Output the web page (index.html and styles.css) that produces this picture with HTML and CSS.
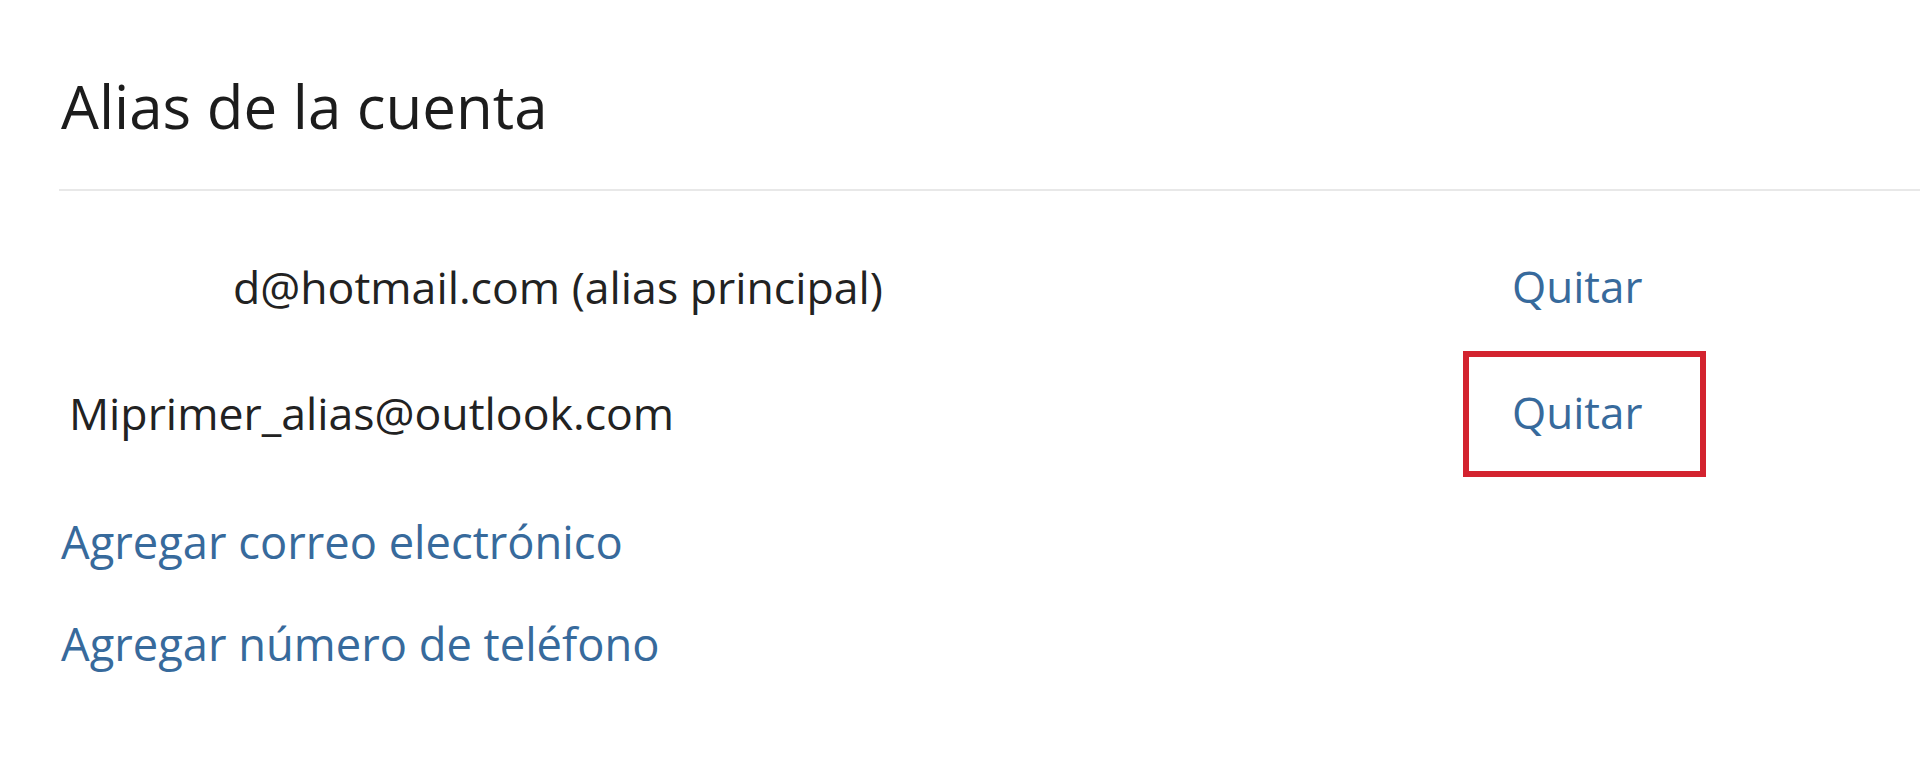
FILE: index.html
```html
<!DOCTYPE html>
<html lang="es">
    <head>
        <meta charset="UTF-8" />
        <meta name="viewport" content="width=device-width, initial-scale=1.0" />
        <title>Alias de la cuenta</title>
        <link rel="stylesheet" href="styles.css">
    </head>
    <body>
        <main class="page">
            <h1 class="title">Alias de la cuenta</h1>

            <ul class="alias-list">
                <li class="alias-row">
                    <span class="alias alias-primary">d@hotmail.com (alias principal)</span>
                    <a class="link" href="#">Quitar</a>
                </li>
                <li class="alias-row">
                    <span class="alias">Miprimer_alias@outlook.com</span>
                    <a class="link marked" href="#">Quitar</a>
                </li>
            </ul>

            <div class="add-links">
                <a class="link" href="#">Agregar correo electrónico</a>
                <a class="link" href="#">Agregar número de teléfono</a>
            </div>
        </main>
    </body>
</html>
```

FILE: styles.css
```css
body {
    margin: 0;
    background: #fff;
    font-family: "Open Sans", "Noto Sans", sans-serif;
    color: #202020;
}
.page {
    padding-top: 66px;
}
.title {
    margin: 0 0 0 59px;
    padding: 0 0 43px 2px;
    font-size: 60px;
    font-weight: 400;
    line-height: 80px;
    color: #1c1c1c;
    border-bottom: 2px solid #e8e8e8;
}
.alias-list {
    list-style: none;
    margin: 32px 0 0;
    padding: 0 0 0 61px;
}
.alias-row {
    display: grid;
    grid-template-columns: 1451px auto;
    align-items: center;
    height: 126px;
    font-size: 44.6px;
}
.alias {
    padding-left: 8px;
    color: #222;
}
.alias-primary {
    padding-left: 172px;
}
.link {
    color: #376a9c;
    text-decoration: none;
    font-size: 44px;
}
.marked {
    position: relative;
    justify-self: start;
}
.marked::after {
    content: "";
    position: absolute;
    left: -49px;
    top: -31px;
    width: 231px;
    height: 114px;
    border: 6px solid #d3232f;
}
.add-links {
    display: flex;
    flex-direction: column;
    margin-top: 16px;
    padding-left: 61px;
}
.add-links .link {
    font-size: 45.3px;
    line-height: 102px;
}
```
